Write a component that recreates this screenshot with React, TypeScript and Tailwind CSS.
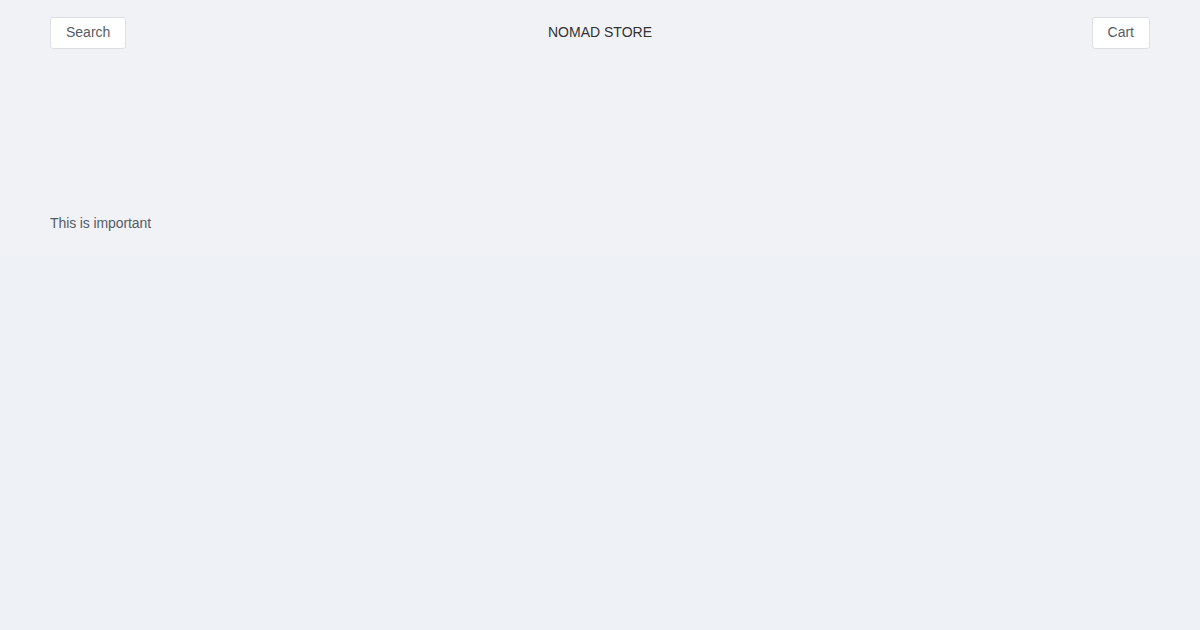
import React from "react";

export default function App() {
  return (
    <div className="w-[1200px] h-[630px] bg-[#eef1f5] flex flex-col" style={{ fontFamily: '"Liberation Sans", Arial, sans-serif' }}>
      <div className="h-[257px] bg-[#f0f2f6] px-[50px] pt-[17px] flex flex-col">
        <div className="grid grid-cols-[1fr_auto_1fr] items-center">
          <div className="flex">
            <button className="h-[32px] px-[15px] pb-[2px] leading-[16px] bg-white border border-[#dcdfe4] rounded-[3px] text-[14px] text-[#555c66]">Search</button>
          </div>
          <div className="text-[14px] leading-[16px] pb-[2px] text-[#333]">NOMAD STORE</div>
          <div className="flex justify-end">
            <button className="h-[32px] px-[15px] pb-[2px] leading-[16px] bg-white border border-[#dcdfe4] rounded-[3px] text-[14px] text-[#555c66]">Cart</button>
          </div>
        </div>
        <p className="mt-[166px] text-[14px] leading-[16px] tracking-[-0.1px] text-[#555c66]">This is important</p>
      </div>
      <div className="flex-1" />
    </div>
  );
}
